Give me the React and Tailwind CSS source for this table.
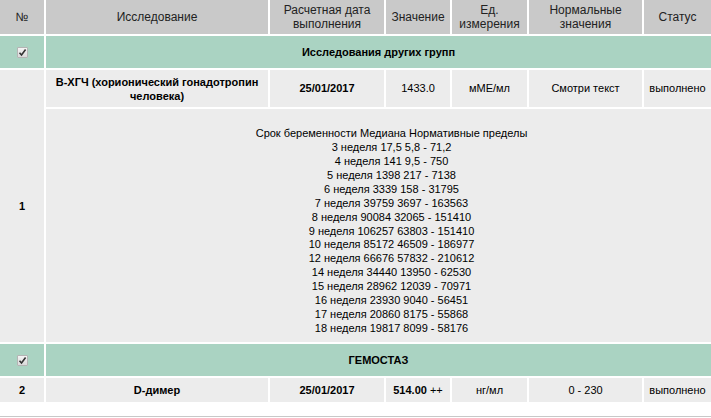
import React from "react";

const weeks = [
  "Срок беременности Медиана Нормативные пределы",
  "3 неделя 17,5 5,8 - 71,2",
  "4 неделя 141 9,5 - 750",
  "5 неделя 1398 217 - 7138",
  "6 неделя 3339 158 - 31795",
  "7 неделя 39759 3697 - 163563",
  "8 неделя 90084 32065 - 151410",
  "9 неделя 106257 63803 - 151410",
  "10 неделя 85172 46509 - 186977",
  "12 неделя 66676 57832 - 210612",
  "14 неделя 34440 13950 - 62530",
  "15 неделя 28962 12039 - 70971",
  "16 неделя 23930 9040 - 56451",
  "17 неделя 20860 8175 - 55868",
  "18 неделя 19817 8099 - 58176",
];

const Check = () => (
  <span className="inline-flex items-center justify-center w-[11px] h-[11px] border border-[#b4b4b4] bg-gradient-to-b from-[#f4f4f4] to-[#dadada] rounded-[1px] align-middle">
    <svg width="9" height="9" viewBox="0 0 9 9">
      <path d="M1.5 4.8 L3.5 7 L7.6 1.6" fill="none" stroke="#333" strokeWidth="1.6" />
    </svg>
  </span>
);

const td = "border-2 border-white text-center align-middle";

export default function App() {
  return (
    <div className="w-[711px] h-[418px] bg-white overflow-hidden" style={{fontFamily: '"Liberation Sans", Arial, sans-serif'}}>
      <table className="w-[711px] border-collapse table-fixed text-[11px] text-black">
        <colgroup>
          <col className="w-[45px]" />
          <col className="w-[224px]" />
          <col className="w-[116px]" />
          <col className="w-[66px]" />
          <col className="w-[77px]" />
          <col className="w-[115px]" />
          <col className="w-[68px]" />
        </colgroup>
        <thead>
          <tr className="h-[35px] bg-[#c9c9c9] text-[12px] leading-[14px] text-[#222]">
            <th className={`${td} border-t-0 border-l-0 font-normal`}>№</th>
            <th className={`${td} border-t-0 font-normal`}>Исследование</th>
            <th className={`${td} border-t-0 font-normal`}>Расчетная дата выполнения</th>
            <th className={`${td} border-t-0 font-normal`}>Значение</th>
            <th className={`${td} border-t-0 font-normal`}>Ед. измерения</th>
            <th className={`${td} border-t-0 font-normal`}>Нормальные значения</th>
            <th className={`${td} border-t-0 border-r-0 font-normal`}>Статус</th>
          </tr>
        </thead>
        <tbody>
          <tr className="h-[34px] bg-[#aad3c2]">
            <td className={`${td} border-l-0`}><Check /></td>
            <td colSpan={6} className={`${td} border-r-0 font-bold`}>Исследования других групп</td>
          </tr>
          <tr className="h-[39px] bg-[#ececec]">
            <td rowSpan={2} className={`${td} border-l-0 font-bold`}>1</td>
            <td className={`${td} font-bold leading-[14px] px-2`}>В-ХГЧ (хорионический гонадотропин человека)</td>
            <td className={`${td} font-bold`}>25/01/2017</td>
            <td className={td}>1433.0</td>
            <td className={td}>мМЕ/мл</td>
            <td className={td}>Смотри текст</td>
            <td className={`${td} border-r-0`}>выполнено</td>
          </tr>
          <tr className="h-[235px] bg-[#ececec]">
            <td colSpan={6} className={`${td} border-r-0 leading-[13.9px] pl-[26px] pt-3`}>
              {weeks.map((w) => (
                <div key={w}>{w}</div>
              ))}
            </td>
          </tr>
          <tr className="h-[34px] bg-[#aad3c2]">
            <td className={`${td} border-l-0`}><Check /></td>
            <td colSpan={6} className={`${td} border-r-0 font-bold`}>ГЕМОСТАЗ</td>
          </tr>
          <tr className="h-[25px] bg-[#ececec]">
            <td className={`${td} border-l-0 border-b-0 font-bold`}>2</td>
            <td className={`${td} border-b-0 font-bold`}>D-димер</td>
            <td className={`${td} border-b-0 font-bold`}>25/01/2017</td>
            <td className={`${td} border-b-0`}><b>514.00</b> ++</td>
            <td className={`${td} border-b-0`}>нг/мл</td>
            <td className={`${td} border-b-0`}>0 - 230</td>
            <td className={`${td} border-b-0 border-r-0`}>выполнено</td>
          </tr>
        </tbody>
      </table>
      <div className="mt-[14px] h-px bg-[#c8c8c8]" />
    </div>
  );
}
